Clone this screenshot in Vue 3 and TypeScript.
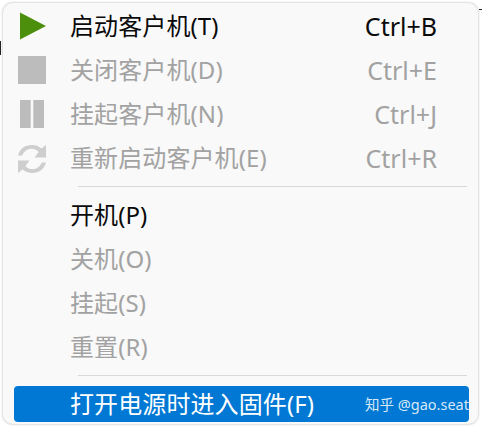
<script setup lang="ts">
interface Item {
  label: string
  key?: string
  icon?: 'play' | 'stop' | 'pause' | 'reset'
  on?: boolean
}
const groups: Item[][] = [
  [
    { label: '启动客户机(T)', key: 'Ctrl+B', icon: 'play', on: true },
    { label: '关闭客户机(D)', key: 'Ctrl+E', icon: 'stop' },
    { label: '挂起客户机(N)', key: 'Ctrl+J', icon: 'pause' },
    { label: '重新启动客户机(E)', key: 'Ctrl+R', icon: 'reset' },
  ],
  [
    { label: '开机(P)', on: true },
    { label: '关机(O)' },
    { label: '挂起(S)' },
    { label: '重置(R)' },
  ],
]
</script>

<template>
  <div class="page">
    <span class="speck speck-left"></span>
    <span class="speck speck-right"></span>
    <div class="menu">
      <template v-for="(group, g) in groups" :key="g">
        <div v-for="item in group" :key="item.label" class="row" :class="{ on: item.on }">
          <span class="icon">
            <svg v-if="item.icon" width="30" height="30" viewBox="0 0 30 30">
              <path v-if="item.icon === 'play'" d="M3 0.5 L29 14 L3 27.5 Z" fill="#4b8f0c" />
              <rect v-else-if="item.icon === 'stop'" x="1" y="0" width="28" height="28" fill="#bcbcbc" />
              <g v-else-if="item.icon === 'pause'" fill="#bcbcbc">
                <rect x="3" y="0" width="10.7" height="28" />
                <rect x="16.3" y="0" width="10.7" height="28" />
              </g>
              <g v-else fill="#cecece">
                <path d="M1 11.5 C2.6 5 8 1 14.6 1 C18.6 1 21.8 2.2 24.4 4.4 L29 1 V13.5 H17.5 L21.6 8 C19.6 5.9 17.3 4.8 14.6 4.8 C10.6 4.8 7 7.4 5.2 11.5 Z" />
                <path d="M29 18.5 C27.4 25 22 29 15.4 29 C11.4 29 8.2 27.8 5.6 25.6 L1 29 V16.5 H12.5 L8.4 22 C10.4 24.1 12.7 25.2 15.4 25.2 C19.4 25.2 23 22.6 24.8 18.5 Z" />
              </g>
            </svg>
          </span>
          <span class="label">{{ item.label }}</span>
          <span v-if="item.key" class="key">{{ item.key }}</span>
        </div>
        <div class="sep" :class="g === 0 ? 'sep-first' : 'sep-last'"></div>
      </template>
      <div class="row active">
        <span class="icon"></span>
        <span class="label">打开电源时进入固件(F)</span>
        <span class="mark">知乎 @gao.seat</span>
      </div>
    </div>
  </div>
</template>

<style>
html,
body {
  margin: 0;
  background: #ffffff;
}
</style>

<style scoped>
.page {
  position: relative;
  width: 482px;
  height: 428px;
  padding: 3px 4px 4px 3px;
  box-sizing: border-box;
  overflow: hidden;
  font-family: "Noto Sans", "Noto Sans CJK SC", sans-serif;
}
.speck {
  position: absolute;
  background: #222222;
}
.speck-left {
  left: 0;
  top: 41px;
  width: 1px;
  height: 14px;
}
.speck-right {
  right: 0;
  top: 9px;
  width: 3px;
  height: 1px;
}
.menu {
  height: 421px;
  box-sizing: border-box;
  background: #f9f9f9;
  border-radius: 10px;
  box-shadow: 0 0 2px 1px #dcdcdc;
  padding: 2px 9px 0 11px;
}
.row {
  position: relative;
  height: 44px;
  display: flex;
  align-items: center;
  color: #a2a2a2;
  font-size: 24px;
  line-height: 42px;
}
.row.on {
  color: #0a0a0a;
}
.icon {
  width: 56px;
  height: 30px;
  flex: none;
  display: flex;
  padding-left: 3px;
  box-sizing: border-box;
}
.label {
  flex: 1;
  white-space: nowrap;
  letter-spacing: 0.1px;
  padding-bottom: 2px;
}
.key {
  margin-right: 32px;
  font-size: 25px;
  padding-bottom: 2px;
  text-align: right;
}
.sep {
  height: 1px;
  margin: 5px 2px 7px 64px;
  background: #d8d8d8;
}
.sep-last {
  margin-bottom: 10px;
}
.active {
  height: 36px;
  margin-top: 2px;
  background: #0078d4;
  color: #ffffff;
  border-radius: 4px;
}
.active .label {
  padding-bottom: 1px;
}
.mark {
  position: absolute;
  right: 0;
  top: 0;
  line-height: 36px;
  font-size: 14.5px;
  color: #d8e8f7;
  white-space: nowrap;
}
</style>
